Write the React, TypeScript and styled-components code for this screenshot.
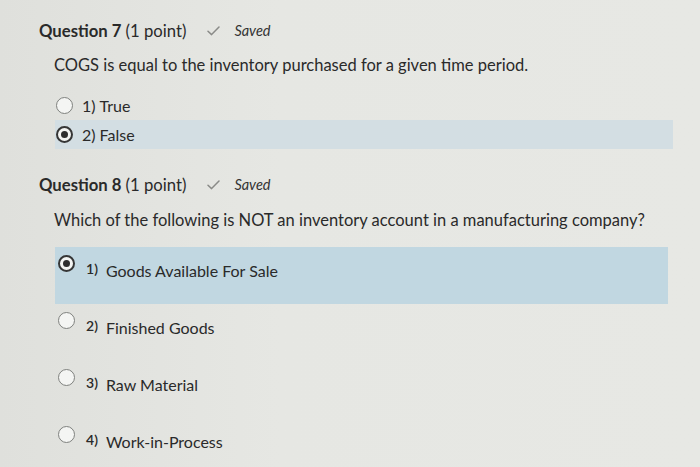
import React from 'react';
import styled, { createGlobalStyle } from 'styled-components';

const GlobalStyle = createGlobalStyle`
  html, body {
    margin: 0;
    padding: 0;
    background: #e4e5e1;
  }
  body {
    font-family: Lato, 'Open Sans', sans-serif;
    color: #2a2a2a;
  }
`;

const Page = styled.div`
  width: 700px;
  height: 467px;
  overflow: hidden;
  box-sizing: border-box;
  padding: 21px 0 0 39px;
  background: linear-gradient(90deg, #dfe0dc 0%, #e6e7e3 40%, #e7e8e4 100%);
`;

const QuestionBlock = styled.section<{ $gap: number }>`
  margin-bottom: ${({ $gap }) => $gap}px;
`;

const Header = styled.div`
  display: flex;
  align-items: center;
  height: 20px;
  font-size: 16.7px;
  line-height: 20px;
`;

const Title = styled.span`
  font-weight: 700;
`;

const Points = styled.span`
  margin-left: 4px;
`;

const SavedTag = styled.span`
  display: inline-flex;
  align-items: center;
  gap: 14px;
  margin-left: 21px;
  font-size: 14.5px;
  font-style: italic;
  color: #333;
`;

const Prompt = styled.p<{ $top: number }>`
  margin: ${({ $top }) => $top}px 0 0 15px;
  font-size: 16.5px;
  line-height: 20px;
`;

const Options = styled.div<{ $top: number; $width: number }>`
  margin: ${({ $top }) => $top}px 0 0 16px;
  width: ${({ $width }) => $width}px;
  display: flex;
  flex-direction: column;
`;

const OptionRow = styled.label<{ $selected: boolean; $tall: boolean; $tint: string }>`
  display: flex;
  align-items: ${({ $tall }) => ($tall ? 'flex-start' : 'center')};
  height: ${({ $tall }) => ($tall ? 57 : 29)}px;
  box-sizing: border-box;
  padding: ${({ $tall }) => ($tall ? '8px 0 0 3px' : '0 0 0 1px')};
  background: ${({ $selected, $tint }) => ($selected ? $tint : 'transparent')};
  font-size: 16px;
  line-height: 20px;
`;

const Radio = styled.span<{ $checked: boolean }>`
  flex: none;
  width: 17px;
  height: 17px;
  box-sizing: border-box;
  border-radius: 50%;
  border: ${({ $checked }) => ($checked ? '2px solid #363636' : '1.3px solid #7f817e')};
  background: #f4f5f3;
  display: flex;
  align-items: center;
  justify-content: center;
  &::after {
    content: '';
    width: 7px;
    height: 7px;
    border-radius: 50%;
    background: #2e2e2e;
    display: ${({ $checked }) => ($checked ? 'block' : 'none')};
  }
`;

const Label = styled.span<{ $tall: boolean }>`
  display: flex;
  align-items: baseline;
  margin-left: ${({ $tall }) => ($tall ? 11 : 9)}px;
  margin-top: ${({ $tall }) => ($tall ? 6 : 0)}px;
`;

const Num = styled.span<{ $tall: boolean }>`
  font-size: ${({ $tall }) => ($tall ? 14 : 16)}px;
  font-weight: ${({ $tall }) => ($tall ? 600 : 400)};
  margin-right: ${({ $tall }) => ($tall ? 8 : 4)}px;
  position: relative;
  top: ${({ $tall }) => ($tall ? -3 : 0)}px;
`;

const Check = () => (
  <svg width="13" height="10" viewBox="0 0 13 10" fill="none">
    <path d="M1 5.2 L4.6 8.6 L12 1" stroke="#8a8b88" strokeWidth="1.5" strokeLinecap="round" strokeLinejoin="round" />
  </svg>
);

type Question = {
  n: number;
  prompt: string;
  options: string[];
  selected: number;
  tall: boolean;
  tint: string;
  width: number;
  promptTop: number;
  optionsTop: number;
  gap: number;
};

const questions: Question[] = [
  {
    n: 7,
    prompt: 'COGS is equal to the inventory purchased for a given time period.',
    options: ['True', 'False'],
    selected: 1,
    tall: false,
    tint: '#d3dee3',
    width: 618,
    promptTop: 14,
    optionsTop: 16,
    gap: 26,
  },
  {
    n: 8,
    prompt: 'Which of the following is NOT an inventory account in a manufacturing company?',
    options: ['Goods Available For Sale', 'Finished Goods', 'Raw Material', 'Work-in-Process'],
    selected: 0,
    tall: true,
    tint: '#c1d7e1',
    width: 613,
    promptTop: 15,
    optionsTop: 17,
    gap: 0,
  },
];

export default function App() {
  return (
    <>
      <GlobalStyle />
      <Page>
        {questions.map((q) => (
          <QuestionBlock key={q.n} $gap={q.gap}>
            <Header>
              <Title>Question {q.n}</Title>
              <Points>(1 point)</Points>
              <SavedTag>
                <Check />
                Saved
              </SavedTag>
            </Header>
            <Prompt $top={q.promptTop}>{q.prompt}</Prompt>
            <Options $top={q.optionsTop} $width={q.width}>
              {q.options.map((opt, i) => (
                <OptionRow key={opt} $selected={i === q.selected} $tall={q.tall} $tint={q.tint}>
                  <Radio $checked={i === q.selected} />
                  <Label $tall={q.tall}>
                    <Num $tall={q.tall}>{i + 1})</Num>
                    {opt}
                  </Label>
                </OptionRow>
              ))}
            </Options>
          </QuestionBlock>
        ))}
      </Page>
    </>
  );
}
